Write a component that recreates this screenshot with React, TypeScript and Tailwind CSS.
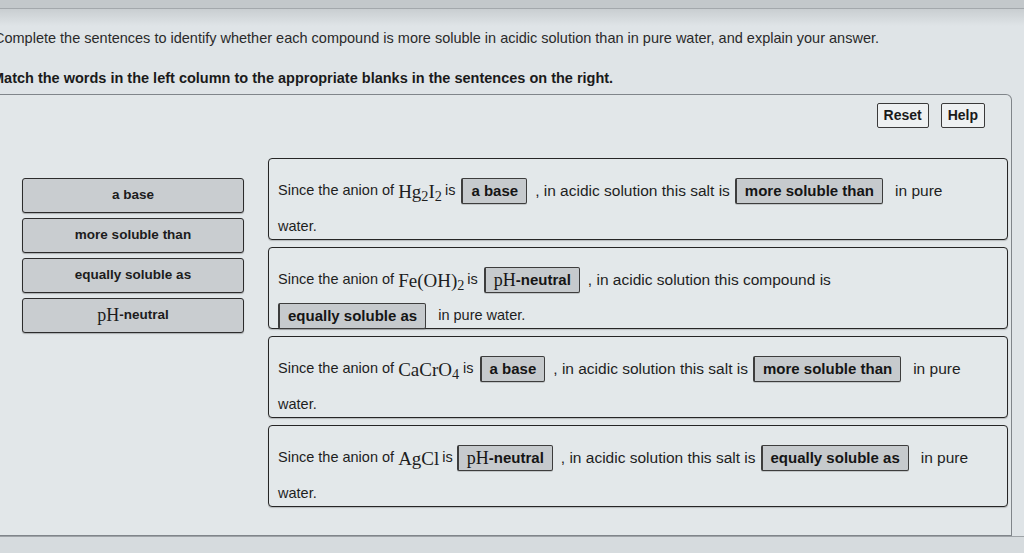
import React from "react";

const Chip = ({ children }: { children: React.ReactNode }) => (
  <span className="inline-flex h-[26px] items-center rounded-[2px] border border-[#3d3d3d] border-l-[2px] bg-[#c6cacd] px-[8px] text-[15px] font-bold text-[#151515] shadow-[0_1px_0_rgba(0,0,0,0.15)]">
    {children}
  </span>
);

const F = ({ children }: { children: React.ReactNode }) => (
  <span className="font-['Liberation_Serif','Times_New_Roman',serif] text-[19px] leading-none">{children}</span>
);

const PH = () => (
  <>
    <span className="font-['Liberation_Serif','Times_New_Roman',serif] text-[18px] font-normal">pH</span>
    <span>-neutral</span>
  </>
);

const Sentence = ({
  row1,
  row2,
}: {
  row1: React.ReactNode;
  row2: React.ReactNode;
}) => (
  <div className="h-[82px] rounded-[4px] border-[1.5px] border-[#262626] bg-[#e3e8ea] pl-[9px] pt-[12px] shadow-[0_1px_1px_rgba(0,0,0,0.2)]">
    <div className="flex h-[40px] items-center whitespace-nowrap text-[14.5px]">{row1}</div>
    <div className="flex h-[32px] items-center whitespace-nowrap text-[14.5px]">{row2}</div>
  </div>
);

const LeftChip = ({ children }: { children: React.ReactNode }) => (
  <div className="flex h-[35px] items-center justify-center rounded-[3px] border-[1.5px] border-[#2c2c2c] bg-[#c9cdd0] text-[13.5px] font-bold text-[#1c1c1c] shadow-[0_1px_1px_rgba(0,0,0,0.25)]">
    {children}
  </div>
);

export default function App() {
  return (
    <div className="relative h-[553px] w-[1024px] overflow-hidden bg-[#dfe4e7] font-['Liberation_Sans',Arial,sans-serif] text-[#1e1e1e]">
      <div className="h-[9px] border-b border-[#a3a8ac] bg-[#c3c8cb]" />
      <div className="h-[17px] bg-gradient-to-b from-[#c9ced1] to-[#dfe4e7]" />
      <p className="ml-[-6px] mt-[2px] whitespace-nowrap text-[14.5px] leading-[20px] text-[#2a2a2a]">
        Complete the sentences to identify whether each compound is more soluble in acidic solution than in pure water, and explain your answer.
      </p>
      <p className="ml-[-8px] mt-[20px] whitespace-nowrap text-[14.5px] font-bold leading-[20px] text-[#1a1a1a]">
        Match the words in the left column to the appropriate blanks in the sentences on the right.
      </p>
      <div className="ml-[-2px] mt-[6px] h-[442px] w-[1014px] rounded-tr-[6px] border border-l-0 border-[#80858a] bg-[#e2e7e9]">
        <div className="flex justify-end gap-[12px] pr-[26px] pt-[8px]">
          <button className="h-[25px] rounded-[2px] border border-[#3a3a3a] bg-[#eef1f2] px-[6px] text-[14px] font-bold text-[#1a1a1a]">
            Reset
          </button>
          <button className="h-[25px] rounded-[2px] border border-[#3a3a3a] bg-[#eef1f2] px-[6px] text-[14px] font-bold text-[#1a1a1a]">
            Help
          </button>
        </div>
        <div className="flex items-start pl-[24px] pt-[30px]">
          <div className="mt-[20px] flex w-[222px] flex-col gap-[5px]">
            <LeftChip>a base</LeftChip>
            <LeftChip>more soluble than</LeftChip>
            <LeftChip>equally soluble as</LeftChip>
            <LeftChip>
              <PH />
            </LeftChip>
          </div>
          <div className="ml-[24px] flex w-[740px] flex-col gap-[7px]">
            <Sentence
              row1={
                <>
                  <span>Since the anion of&nbsp;</span>
                  <F>
                    Hg<sub>2</sub>I<sub>2</sub>
                  </F>
                  <span className="ml-[3px] mr-[6px]">is</span>
                  <Chip>a base</Chip>
                  <span className="ml-[8px] mr-[5px] text-[15.5px]">, in acidic solution this salt is</span>
                  <Chip>more soluble than</Chip>
                  <span className="ml-[12px] text-[15.5px]">in pure</span>
                </>
              }
              row2={<span>water.</span>}
            />
            <Sentence
              row1={
                <>
                  <span>Since the anion of&nbsp;</span>
                  <F>
                    Fe(OH)<sub>2</sub>
                  </F>
                  <span className="ml-[3px] mr-[6px]">is</span>
                  <Chip>
                    <PH />
                  </Chip>
                  <span className="ml-[8px] text-[15.5px]">, in acidic solution this compound is</span>
                </>
              }
              row2={
                <>
                  <Chip>equally soluble as</Chip>
                  <span className="ml-[12px]">in pure water.</span>
                </>
              }
            />
            <Sentence
              row1={
                <>
                  <span>Since the anion of&nbsp;</span>
                  <F>
                    CaCrO<sub>4</sub>
                  </F>
                  <span className="ml-[4px] mr-[6px]">is</span>
                  <Chip>a base</Chip>
                  <span className="ml-[8px] mr-[5px] text-[15.5px]">, in acidic solution this salt is</span>
                  <Chip>more soluble than</Chip>
                  <span className="ml-[12px] text-[15.5px]">in pure</span>
                </>
              }
              row2={<span>water.</span>}
            />
            <Sentence
              row1={
                <>
                  <span>Since the anion of&nbsp;</span>
                  <F>AgCl</F>
                  <span className="ml-[3px] mr-[4px]">is</span>
                  <Chip>
                    <PH />
                  </Chip>
                  <span className="ml-[8px] mr-[5px] text-[15.5px]">, in acidic solution this salt is</span>
                  <Chip>equally soluble as</Chip>
                  <span className="ml-[12px] text-[15.5px]">in pure</span>
                </>
              }
              row2={<span>water.</span>}
            />
          </div>
        </div>
      </div>
      <div className="h-[20px] border-t border-[#9ea3a7] bg-[#d6dbde]" />
    </div>
  );
}
